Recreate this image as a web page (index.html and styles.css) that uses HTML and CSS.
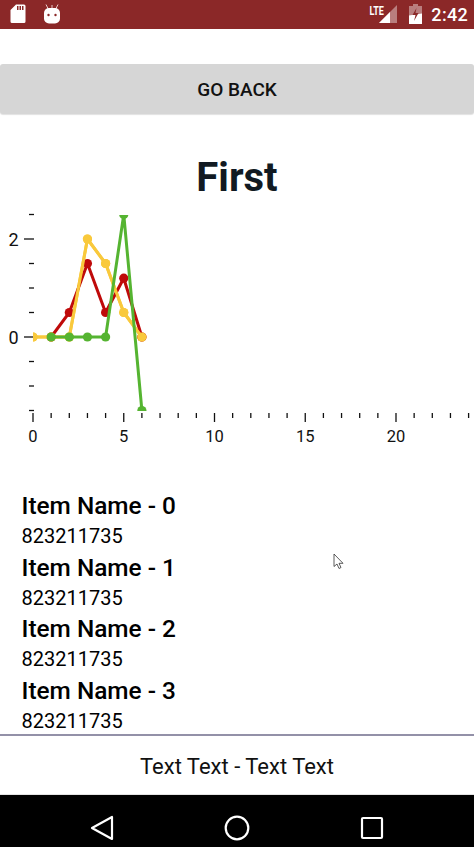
FILE: index.html
```html
<!DOCTYPE html>
<html lang="en">
<head>
  <meta charset="UTF-8">
  <title>First</title>
  <link rel="stylesheet" href="styles.css">
</head>
<body>

<div class="status-bar">
  <div class="status-left">
    <svg class="icon-sd" width="16" height="19" viewBox="0 0 16 19">
      <path d="M6 0.5h8a1.5 1.5 0 0 1 1.5 1.5v15.5a1.5 1.5 0 0 1-1.5 1.5h-12a1.5 1.5 0 0 1-1.5-1.5v-11.500z" fill="#fff"/>
      <path d="M7 2h1.500v4h-1.500zM9.500 2h1.500v4h-1.500zM12 2h1.500v4h-1.500z" fill="#8b2828"/>
    </svg>
    <svg class="icon-bot" width="18" height="20" viewBox="0 0 18 20">
      <path d="M3 0.500l2 4M15 0.500l-2 4M9 1v3" stroke="#e8c8c8" stroke-width="1" fill="none"/>
      <rect x="1" y="4" width="16" height="15.500" rx="5" fill="#fff"/>
      <circle cx="5.500" cy="11" r="1.200" fill="#8b2828"/>
      <circle cx="12.500" cy="11" r="1.200" fill="#8b2828"/>
    </svg>
  </div>
  <div class="status-right">
    <span class="lte">LTE</span>
    <svg class="icon-signal" width="20" height="19" viewBox="0 0 20 19">
      <path d="M19 0v18h-18z" fill="#fff" fill-opacity="0.4"/>
      <path d="M12 7v11h-11z" fill="#fff"/>
    </svg>
    <svg class="icon-battery" width="13" height="20" viewBox="0 0 13 20">
      <path d="M4 0h5v2h4v18h-13v-18h4z" fill="#fff" fill-opacity="0.4"/>
      <path d="M0 18.500v-7l13-2v10.500h-13z" fill="#fff"/>
      <path d="M7.500 4l-4 7h3l-1.500 6 4.500-8h-3z" fill="#8b2828"/>
    </svg>
    <span class="clock">2:42</span>
  </div>
</div>

<div class="screen">
  <button class="back-btn">GO BACK</button>
  <h1 class="title">First</h1>

  <svg class="chart" width="474" height="270" viewBox="0 200 474 270">
    <defs>
      <clipPath id="plot"><rect x="33" y="215" width="441" height="196"/></clipPath>
    </defs>
    <g id="ticks" stroke="#111" fill="none"></g>
    <g id="labels" class="axis-label"></g>
    <g id="series" clip-path="url(#plot)"></g>
  </svg>

  <div class="items" id="items"></div>
</div>

<div class="footer">Text Text - Text Text</div>

<div class="nav-bar">
  <svg width="24" height="26" viewBox="0 0 24 26">
    <path d="M22 2v22l-20-11z" fill="none" stroke="#fff" stroke-width="2.200" stroke-linejoin="round"/>
  </svg>
  <svg width="26" height="26" viewBox="0 0 26 26">
    <circle cx="13" cy="13" r="11.300" fill="none" stroke="#fff" stroke-width="2.200"/>
  </svg>
  <svg width="24" height="24" viewBox="0 0 24 24">
    <rect x="2" y="2" width="20" height="20" rx="1" fill="none" stroke="#fff" stroke-width="2.200"/>
  </svg>
</div>

<svg class="pointer" width="12" height="18" viewBox="0 0 12 18">
  <path d="M1 1v12.500l3-2.500 2 4.500 2-1-2-4.200h4z" fill="#fff" stroke="#333" stroke-width="0.800"/>
</svg>

<script>
  const X0 = 33, X_STEP = 18.15, Y0 = 337, Y_STEP = 49;
  const NS = "http://www.w3.org/2000/svg";
  const px = v => X0 + v * X_STEP;
  const py = v => Y0 - v * Y_STEP;

  const seriesData = [
    { color: "#f9c93c", start: 0, values: [0, 0, 0, 2, 1.5, 0.5, 0] },
    { color: "#bf0a0a", start: 1, values: [0, 0.5, 1.5, 0.5, 1.2, 0] },
    { color: "#f9c93c", start: 0, values: [0, 0, 0, 2, 1.5, 0.5, 0] },
    { color: "#55b431", start: 1, values: [0, 0, 0, 0, 2.5, -1.5] }
  ];

  function add(parent, tag, attrs, text) {
    const el = document.createElementNS(NS, tag);
    Object.keys(attrs).forEach(k => el.setAttribute(k, attrs[k]));
    if (text !== undefined) el.textContent = text;
    parent.appendChild(el);
  }

  const ticks = document.getElementById("ticks");
  const labels = document.getElementById("labels");
  const seriesEl = document.getElementById("series");

  for (let i = 0; i <= 24; i++) {
    const major = i % 5 === 0;
    add(ticks, "line", { x1: px(i), x2: px(i), y1: 413, y2: major ? 422 : 418, "stroke-width": 1.300 });
    if (major) add(labels, "text", { x: px(i), y: 442, "text-anchor": "middle" }, i);
  }

  for (let i = -3; i <= 5; i++) {
    const v = i / 2;
    const major = i % 4 === 0;
    add(ticks, "line", { x1: major ? 24 : 29, x2: 34, y1: py(v), y2: py(v), "stroke-width": 1.300 });
    if (major && v >= 0) add(labels, "text", { x: 18.500, y: py(v) + 6.500, "text-anchor": "end", class: "y-label" }, v);
  }

  seriesData.forEach(s => {
    const points = s.values.map((v, i) => px(s.start + i) + "," + py(v)).join(" ");
    add(seriesEl, "polyline", { points: points, fill: "none", stroke: s.color, "stroke-width": 3 });
    s.values.forEach((v, i) => add(seriesEl, "circle", { cx: px(s.start + i), cy: py(v), r: 4.600, fill: s.color }));
  });

  const itemsEl = document.getElementById("items");
  for (let i = 0; i < 4; i++) {
    itemsEl.innerHTML += `<div class="item"><div class="item-name">Item Name - ${i}</div><div class="item-number">823211735</div></div>`;
  }
</script>

</body>
</html>
```

FILE: styles.css
```css
* {
  box-sizing: border-box;
}
body {
  margin: 0;
  width: 474px;
  height: 847px;
  overflow: hidden;
  display: flex;
  flex-direction: column;
  position: relative;
  font-family: Roboto, sans-serif;
  background: #fff;
}
.status-bar {
  height: 29px;
  flex: none;
  background: #8b2828;
  display: flex;
  justify-content: space-between;
  align-items: center;
  color: #fff;
}
.status-left {
  display: flex;
  align-items: center;
  gap: 17px;
  padding-left: 10px;
  margin-top: -2px;
}
.status-right {
  display: flex;
  align-items: center;
  padding-right: 6px;
  margin-top: -1px;
}
.lte {
  font-size: 12px;
  font-weight: 700;
  align-self: flex-start;
  margin-right: -8px;
  transform: scaleX(0.75);
}
.icon-signal {
  margin-right: 11px;
}
.icon-battery {
  margin-right: 9px;
}
.clock {
  font-size: 18px;
  font-weight: 500;
  letter-spacing: 0.3px;
}
.screen {
  flex: 1;
  min-height: 0;
  overflow: hidden;
  padding-top: 35px;
}
.back-btn {
  display: block;
  width: 100%;
  height: 50px;
  border: none;
  border-radius: 3px;
  background: #d6d6d6;
  box-shadow: 0 1px 1px rgba(0,0,0,0.12);
  color: #111;
  font-family: Roboto, sans-serif;
  font-size: 19px;
  font-weight: 500;
}
.title {
  margin: 37px 0 0;
  height: 49px;
  line-height: 54px;
  text-align: center;
  font-size: 40px;
  font-weight: 700;
  color: #111a22;
}
.chart {
  display: block;
}
.axis-label {
  font-size: 16.500px;
  fill: #111;
}
.y-label {
  font-size: 18px;
}
.items {
  padding-left: 21.500px;
  margin-top: 20px;
}
.item {
  height: 61.500px;
  color: #000;
}
.item-name {
  font-size: 24.400px;
  font-weight: 500;
  line-height: 32px;
}
.item-number {
  font-size: 20px;
  line-height: 29px;
}
.footer {
  height: 61px;
  flex: none;
  border-top: 2px solid #9391a8;
  border-bottom: 1px solid #e4e4e4;
  text-align: center;
  font-size: 22px;
  line-height: 61px;
  color: #111;
}
.nav-bar {
  height: 52px;
  flex: none;
  background: #000;
  display: flex;
  justify-content: space-between;
  align-items: center;
  padding: 21px 90px 7px 90px;
}
.pointer {
  position: absolute;
  left: 333px;
  top: 553px;
}
```
